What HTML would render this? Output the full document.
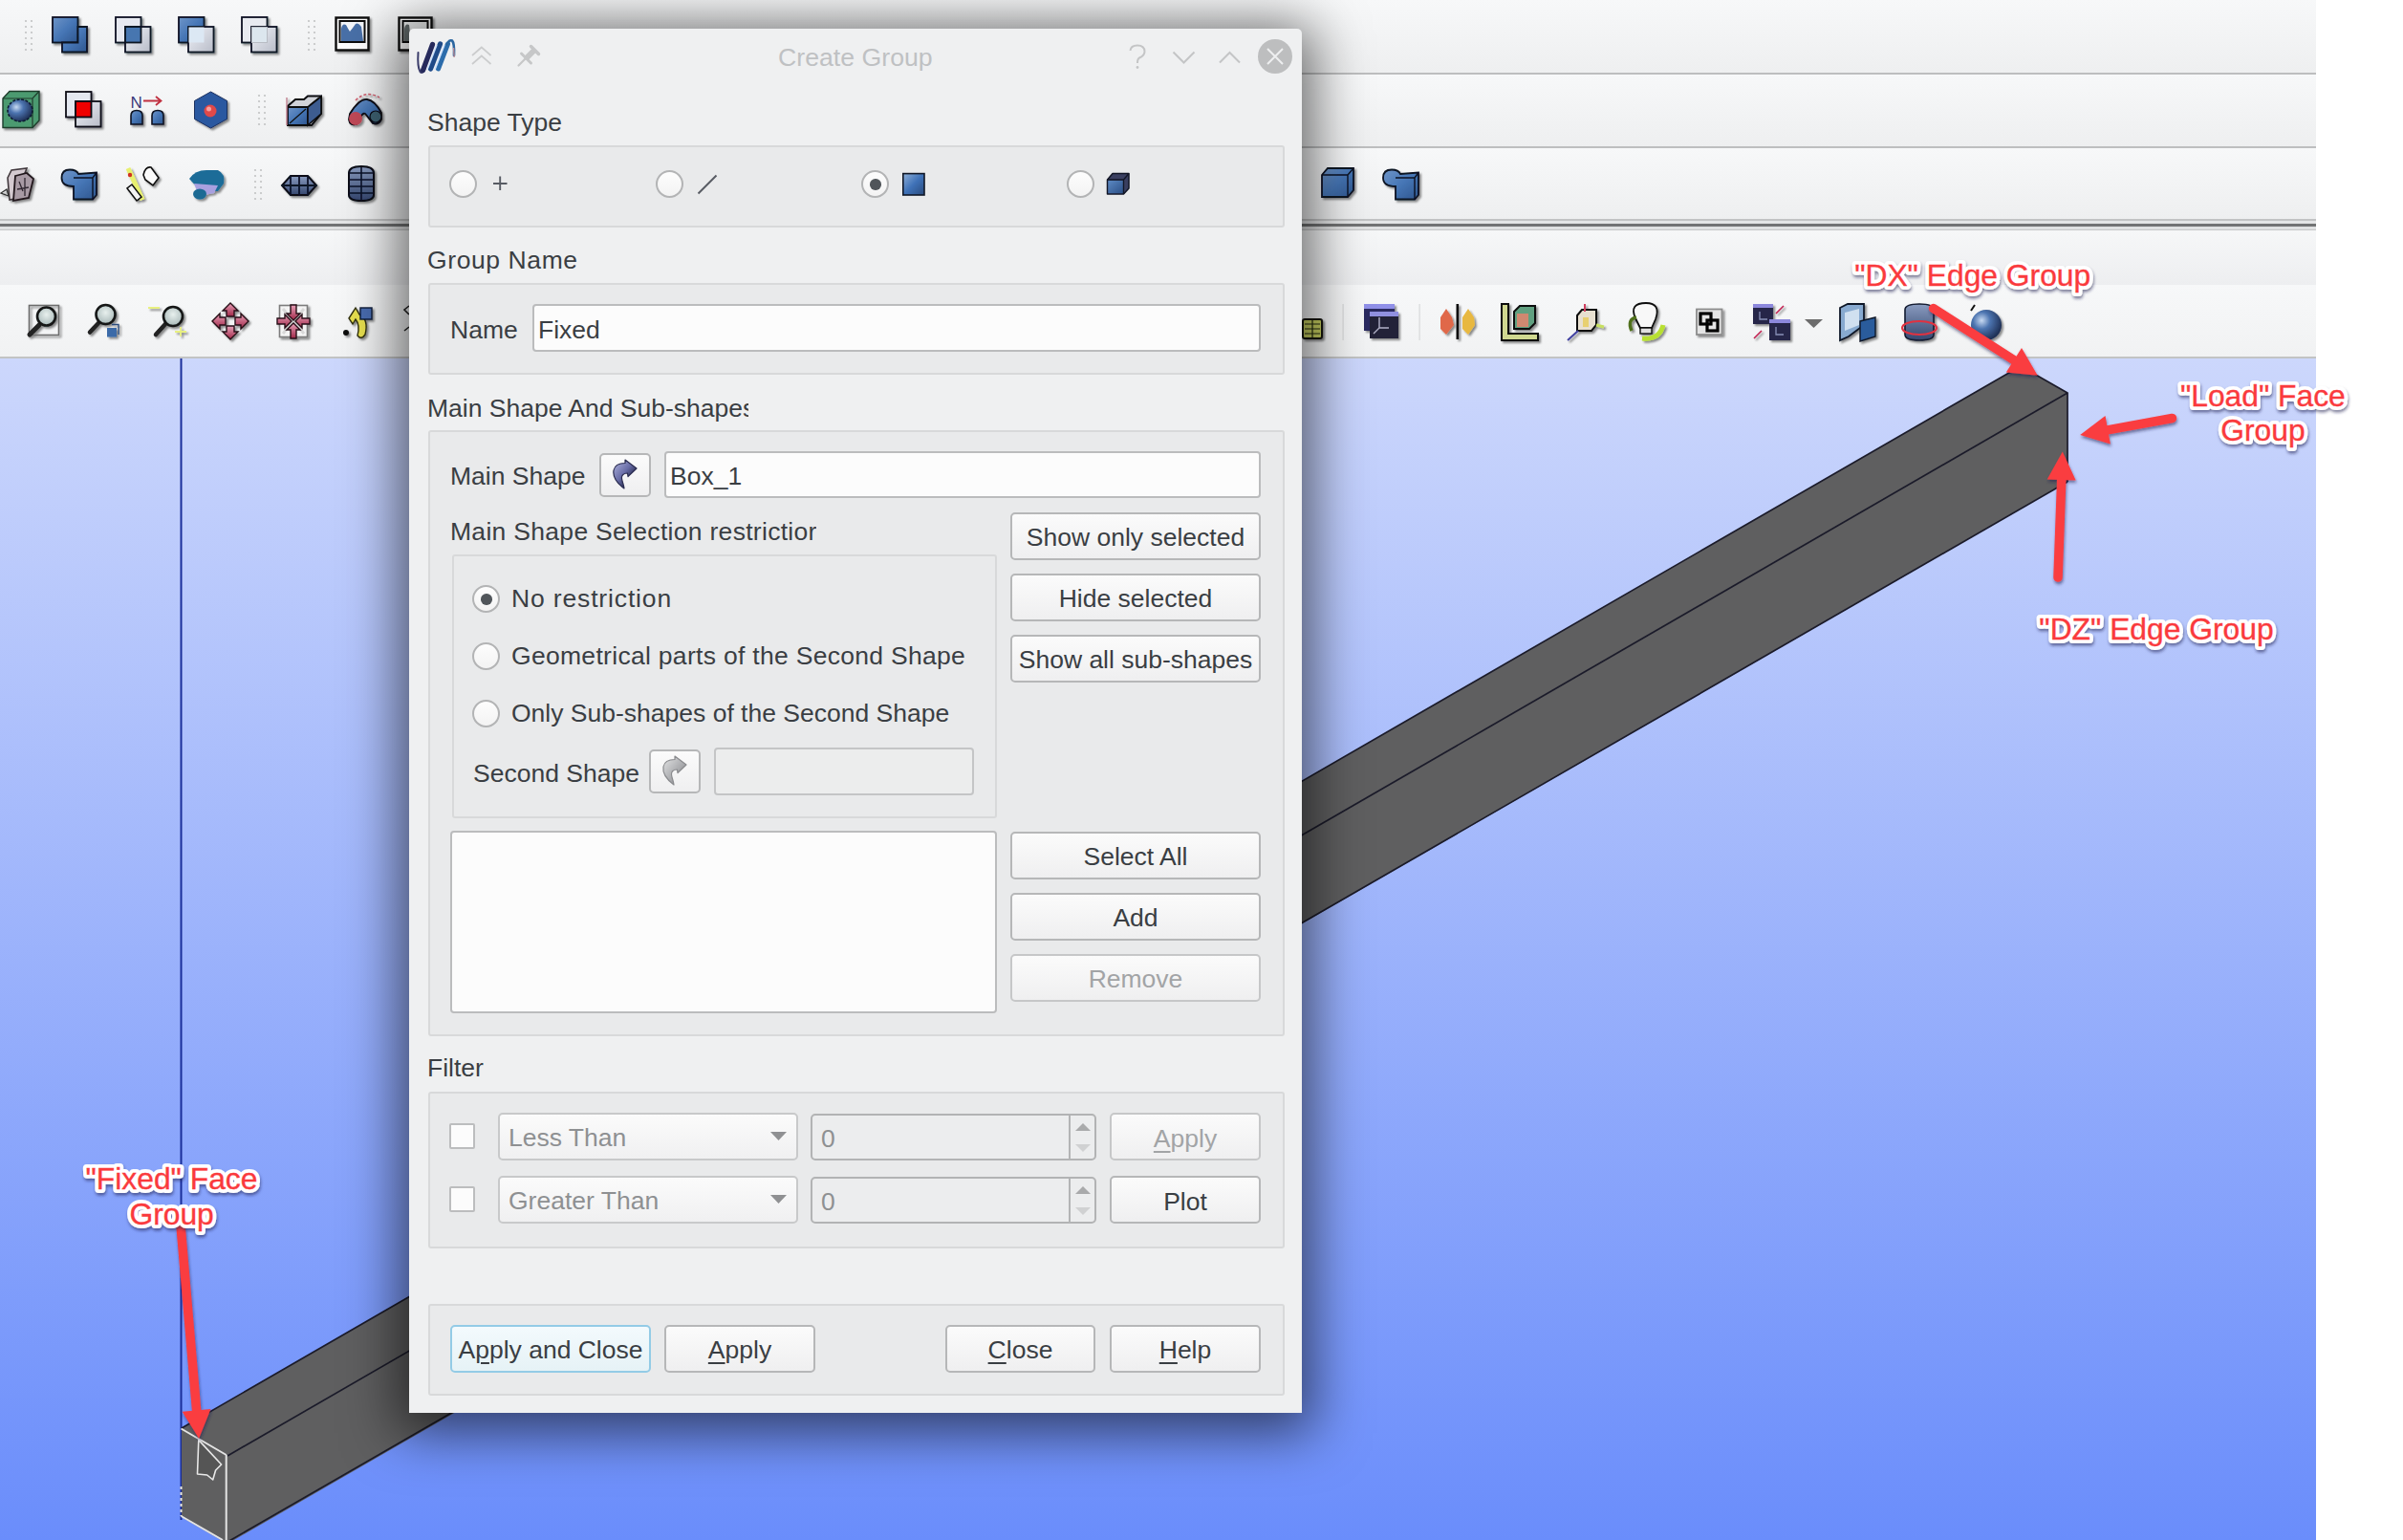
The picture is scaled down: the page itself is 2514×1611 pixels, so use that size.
<!DOCTYPE html>
<html><head><meta charset="utf-8">
<style>
*{box-sizing:border-box}
html,body{margin:0;padding:0}
body{width:2514px;height:1611px;position:relative;overflow:hidden;background:#fff;font-family:"Liberation Sans",sans-serif}
.a{position:absolute}
#app{left:0;top:0;width:2423px;height:1611px;overflow:hidden;background:#eff0f1}
.tb{position:absolute;left:0;width:2423px}
.t{position:absolute;white-space:nowrap;font-size:26.5px;color:#3a3e43;line-height:1}
.t u{text-decoration:underline;text-decoration-thickness:2px;text-underline-offset:4px}
.gb{position:absolute;background:#e9eaeb;border:2px solid #d8d9da;border-radius:3px}
.btn{position:absolute;background:linear-gradient(#fbfbfb,#efeff0);border:2px solid #b6b7b8;border-radius:5px}
.btn.dis{border-color:#c6c7c8}
.btn.foc{border:2px solid #93cbe6;background:linear-gradient(#f3fafd,#e6f2f6)}
.inp{position:absolute;background:#fcfcfc;border:2px solid #bbbcbd;border-radius:4px}
.inp.dis{background:#eceded;border-color:#c4c5c6}
.combo{position:absolute;background:linear-gradient(#fbfbfb,#f0f0f1);border:2px solid #c8c9ca;border-radius:5px}
.spin{position:absolute;background:#ecedee;border:2px solid #b2b3b4;border-radius:5px}
.rad{position:absolute;border-radius:50%;border:2px solid #b3b4b5;background:linear-gradient(#fdfdfd,#f3f3f3)}
.rad.on::after{content:"";position:absolute;left:7px;top:7px;width:11.5px;height:11.5px;border-radius:50%;background:#50555a}
.chk{position:absolute;border:2px solid #bcbdbe;border-radius:2px;background:#fcfcfc}
</style></head>
<body>
<div id="app" class="a">
  <div class="tb" style="top:0;height:76px;background:linear-gradient(#f7f8f9,#eeeff0)"></div>
  <div class="tb" style="top:75.5px;height:2px;background:#bdbebf"></div>
  <div class="tb" style="top:77.5px;height:75.5px;background:linear-gradient(#f7f8f9,#eeeff0)"></div>
  <div class="tb" style="top:152.5px;height:2px;background:#bdbebf"></div>
  <div class="tb" style="top:154.5px;height:74.5px;background:linear-gradient(#f7f8f9,#eeeff0)"></div>
  <div class="tb" style="top:229px;height:1.5px;background:#c2c3c4"></div>
  <div class="tb" style="top:230.5px;height:3px;background:#e4e5e6"></div>
  <div class="tb" style="top:233.5px;height:3px;background:#727374"></div>
  <div class="tb" style="top:236.5px;height:3px;background:#e0e1e2"></div>
  <div class="tb" style="top:239.5px;height:1.5px;background:#c6c7c8"></div>
  <div class="tb" style="top:241px;height:57px;background:linear-gradient(#f6f7f8,#edeef0)"></div>
  <div class="tb" style="top:298px;height:75px;background:linear-gradient(#f7f8f9,#f1f2f3)"></div>
  <div class="tb" style="top:373px;height:2px;background:#c2c3c4"></div>
  <div class="a" style="left:0;top:375px;width:2423px;height:1236px;background:linear-gradient(#ccd7fc,#6a8dfb)"></div>
  <svg class="a" style="left:0;top:0" width="2423" height="1611" viewBox="0 0 2423 1611">
    <line x1="189.5" y1="375" x2="189.5" y2="1590" stroke="#1a2f9a" stroke-width="2"/>
    <polygon points="2114,383 2163,411 2163,504 238,1615 190,1587 190,1494" fill="#5f5f60"/>
    <polyline points="190,1494 2114,383 2163,411 2163,504" fill="none" stroke="#1b1b2a" stroke-width="1.7"/>
    <line x1="238" y1="1523" x2="2163" y2="411" stroke="#1b1b2a" stroke-width="1.7"/>
    <line x1="238" y1="1613" x2="2163" y2="504" stroke="#1b1b2a" stroke-width="1.7"/>
    <path d="M189.5,1494.5 L236.7,1522 M236.7,1522 L236.7,1611 M189.5,1586 L233,1611" fill="none" stroke="#e4e4e4" stroke-width="2"/><path d="M189.5,1555 L189.5,1586" fill="none" stroke="#e4e4e4" stroke-width="2" stroke-dasharray="3 3"/><path d="M207.8,1506.4 L206.5,1542 L216.7,1543 L222.7,1548 L225.6,1538 L231.6,1532 Z" fill="#555555" stroke="#e8e8e8" stroke-width="1.6" stroke-linejoin="round"/>
  </svg>
  <!--ICONS-->
<svg class="a" style="left:0;top:0" width="2423" height="374" viewBox="0 0 2423 374">
<defs>
  <linearGradient id="bl" x1="0" y1="0" x2="1" y2="1"><stop offset="0" stop-color="#6f95c8"/><stop offset="0.5" stop-color="#4676b6"/><stop offset="1" stop-color="#2f568e"/></linearGradient>
  <linearGradient id="lt" x1="0" y1="0" x2="1" y2="1"><stop offset="0" stop-color="#f0f2f8"/><stop offset="1" stop-color="#b8bcc8"/></linearGradient>
  <linearGradient id="dk" x1="0" y1="0" x2="0" y2="1"><stop offset="0" stop-color="#8a9cc0"/><stop offset="1" stop-color="#34466e"/></linearGradient>
  <radialGradient id="sph" cx="0.35" cy="0.35" r="0.7"><stop offset="0" stop-color="#c8daf2"/><stop offset="0.4" stop-color="#4c74b0"/><stop offset="1" stop-color="#1c2c50"/></radialGradient>
  <radialGradient id="lens" cx="0.5" cy="0.4" r="0.6"><stop offset="0" stop-color="#e8f0ee"/><stop offset="1" stop-color="#a8b8b8"/></radialGradient>
  <linearGradient id="pk" x1="0" y1="0" x2="0" y2="1"><stop offset="0" stop-color="#e8a0b8"/><stop offset="1" stop-color="#a02848"/></linearGradient>
  <filter id="sh" x="-20%" y="-20%" width="150%" height="150%"><feGaussianBlur in="SourceAlpha" stdDeviation="1.2"/><feOffset dx="1.5" dy="2" result="o"/><feComponentTransfer><feFuncA type="linear" slope="0.45"/></feComponentTransfer><feMerge><feMergeNode/><feMergeNode in="SourceGraphic"/></feMerge></filter>
  <g id="grip" fill="#c2c3c4"><circle cx="0" cy="0" r="1.1"/><circle cx="6" cy="0" r="1.1"/><circle cx="0" cy="6" r="1.1"/><circle cx="6" cy="6" r="1.1"/><circle cx="0" cy="12" r="1.1"/><circle cx="6" cy="12" r="1.1"/><circle cx="0" cy="18" r="1.1"/><circle cx="6" cy="18" r="1.1"/><circle cx="0" cy="24" r="1.1"/><circle cx="6" cy="24" r="1.1"/><circle cx="0" cy="30" r="1.1"/><circle cx="6" cy="30" r="1.1"/></g>
</defs>
<!-- ROW 1 -->
<use href="#grip" x="27" y="22"/>
<g filter="url(#sh)" stroke="#0c1222" stroke-width="1.8">
  <rect x="55" y="18" width="26.5" height="26.5" fill="url(#bl)"/>
  <path d="M81.5,28 L91,28 L91,54.5 L65,54.5 L65,44.5 L81.5,44.5 Z" fill="url(#bl)"/>
  <rect x="121" y="18" width="26.5" height="26.5" fill="#e6e8f0"/>
  <rect x="131" y="28" width="26.5" height="26.5" fill="url(#lt)"/>
  <rect x="131" y="28" width="16.5" height="16.5" fill="#4676b0"/>
  <rect x="187" y="18" width="26.5" height="26.5" fill="url(#bl)"/>
  <rect x="197" y="28" width="26.5" height="26.5" fill="url(#lt)"/>
  <rect x="253" y="18" width="26.5" height="26.5" fill="#e8eaf0"/>
  <rect x="263" y="28" width="26.5" height="26.5" fill="url(#lt)"/>
</g>
<rect x="197.5" y="28.5" width="16" height="16" fill="#dce8f4"/>
<rect x="263.5" y="28.5" width="16" height="16" fill="#dce6ee" stroke="#b8bcc4" stroke-width="1"/>
<use href="#grip" x="323" y="22"/>
<g filter="url(#sh)">
  <rect x="351.5" y="18.5" width="34" height="34" fill="#fff" stroke="#0a0a0a" stroke-width="2.4"/>
  <rect x="355.5" y="22" width="26" height="22" fill="#f4f6fa" stroke="#0a0a0a" stroke-width="2"/>
  <path d="M357,43 L357,30 Q358,24 362,26 Q364,30 366,33 Q370,28 372,25 Q375,23 378,28 L380,43 Z" fill="#4a70a8"/>
  <rect x="417.5" y="18.5" width="34" height="34" fill="#fff" stroke="#0a0a0a" stroke-width="2.4"/>
  <rect x="421.5" y="22" width="26" height="22" fill="#e8eaea" stroke="#0a0a0a" stroke-width="2"/><path d="M423,43 L423,30 Q424,24 428,26 L430,43 Z" fill="#606868"/>
</g>
<!-- ROW 2 -->
<g filter="url(#sh)">
  <path d="M3,103 L10,95.5 L41,95.5 L41,126 L34,133.5 L3,133.5 Z" fill="#4c9a70" stroke="#1e3c2c" stroke-width="1.4"/>
  <path d="M3,103 L34,103 L41,95.5 M34,103 L34,133.5" fill="none" stroke="#1e3c2c" stroke-width="1.2"/>
  <ellipse cx="21" cy="115.5" rx="13" ry="11.5" fill="url(#sph)" stroke="#0e1a30" stroke-width="1.6" stroke-dasharray="3 1.5"/>
</g>
<g filter="url(#sh)" stroke="#0c0c14" stroke-width="1.8">
  <rect x="69" y="96" width="26.5" height="26.5" fill="#e4e8f0"/>
  <rect x="79" y="106" width="26.5" height="26.5" fill="url(#lt)"/>
  <rect x="79" y="106" width="16.5" height="16.5" fill="#f00000"/>
</g>
<text x="136.5" y="112.5" font-family="Liberation Sans" font-size="17" fill="#3c3a7a">N</text>
<path d="M150,105.5 L168,105.5 M163,101 L168.5,105.5 L163,110" stroke="#c03040" stroke-width="1.8" fill="none"/>
<g filter="url(#sh)" stroke="#0c1222" stroke-width="1.6" fill="url(#bl)">
  <path d="M137,130 L137,121 Q137,115.5 143,115.5 Q149,115.5 149,121 L149,130 Z"/>
  <path d="M159,130 L159,121 Q159,115.5 165,115.5 Q171,115.5 171,121 L171,130 Z"/>
</g>
<g filter="url(#sh)">
  <path d="M220.5,96 L237.5,105.5 L237.5,124.5 L220.5,134 L203.5,124.5 L203.5,105.5 Z" fill="#2c58a0" stroke="#1a3060" stroke-width="1"/>
  <circle cx="220" cy="116" r="6.5" fill="#e04848"/>
  <circle cx="218.5" cy="114" r="2.5" fill="#f8a0a0"/>
</g>
<use href="#grip" x="271" y="100"/>
<g filter="url(#sh)">
  <path d="M301,111 L309,104 L318,104 L322,100.5 L336,100.5 L336,119 L326,131 L301,131 Z" fill="#d0d2d8" stroke="#0a0a10" stroke-width="2"/>
  <path d="M301,112 L322,112 L322,131 L301,131 Z" fill="url(#bl)" stroke="#0a0a10" stroke-width="1.8"/>
  <path d="M322,112 L336,101 L336,119 L322,131 Z" fill="#3c5c90" stroke="#0a0a10" stroke-width="1.6"/>
  <path d="M303,129 L320,114 M324,110 L334,102" stroke="#101010" stroke-width="1.2"/>
  <path d="M300,102 L300,131" stroke="#c08090" stroke-width="1.4"/>
</g>
<g filter="url(#sh)">
  <path d="M366,119 Q376,103 384,104 Q392,105 399,118 L399,125 Q396,131 390,129 L383,120 Q381,117 378,121 L373,130 Q366,132 365,125 Z" fill="url(#bl)" stroke="#0a0a14" stroke-width="1.8"/>
  <circle cx="372" cy="124" r="7" fill="#c04858"/>
  <circle cx="393" cy="122" r="6" fill="#3c6070" stroke="#0a0a14" stroke-width="1.2"/>
  <path d="M372,105 Q383,94 397,102" stroke="#d06070" stroke-width="1.6" fill="none" stroke-dasharray="3 2"/>
</g>
<!-- ROW 3 -->
<g filter="url(#sh)">
  <path d="M8,186 L12,178 L28,176 L25,184 L26,206 L10,209 Z" fill="#d4cad0" stroke="#40383c" stroke-width="1.6"/>
  <path d="M16,184 L28,181 L35,187 L30,207 L14,210 Z" fill="#a89aa4" stroke="#20181c" stroke-width="1.8"/>
  <path d="M20,190 L24,200 M26,186 L26,205 M18,198 L30,196" stroke="#302830" stroke-width="1.3"/>
  <path d="M1,202 L7,198 L9,205 Z" fill="none" stroke="#303030" stroke-width="1.3"/>
</g>
<g filter="url(#sh)" stroke="#0c1222" stroke-width="1.8">
  <path d="M64.5,186 Q64.5,177.5 73,177.5 Q80,177.5 82,182 L101,180.5 L101,204 L97,208.5 L77,208.5 L77,195 Q64.5,195 64.5,186 Z" fill="url(#bl)"/>
  <path d="M77,186 L97,186 L101,180.5 M97,186 L97,208.5" fill="none" stroke-width="1.4"/>
</g>
<g filter="url(#sh)">
  <path d="M134,176 L149,209" stroke="#e8f070" stroke-width="5"/>
  <path d="M133,197 L143,210 L148,206 L138,193 Z" fill="#f4f4f4" stroke="#101010" stroke-width="1.5"/>
  <path d="M150,183 Q152,174 158,175 L166,186 L160,194 L152,188 Z" fill="#fafafa" stroke="#101010" stroke-width="1.6"/>
  <circle cx="136" cy="183" r="2.2" fill="#d03020"/>
</g>
<g filter="url(#sh)">
  <path d="M198,187 Q204,178 216,178 L228,178 Q236,182 234,192 L228,200 L210,200 Z" fill="#1c6c98"/>
  <path d="M203,192 L228,194 L224,202 L208,205 Z" fill="#a8a0e0"/>
  <ellipse cx="209" cy="203" rx="7" ry="5.5" fill="#1c6a94"/>
</g>
<use href="#grip" x="267" y="178"/>
<g filter="url(#sh)">
  <path d="M295,194 L304,184 L322,184 L331,194 L322,204 L304,204 Z" fill="url(#dk)" stroke="#080c18" stroke-width="2"/>
  <path d="M304,184 L304,204 M313,183 L313,205 M322,184 L322,204 M295,194 L331,194" stroke="#0a1228" stroke-width="1.8"/>
</g>
<g filter="url(#sh)">
  <path d="M365,181 Q365,174 378,174 Q391,174 391,181 L391,204 Q391,210 378,210 Q365,210 365,204 Z" fill="url(#dk)" stroke="#080c18" stroke-width="2"/>
  <path d="M378,175 L378,210 M365,181 L391,181 M365,188 L391,188 M365,195 L391,195 M365,202 L391,202" stroke="#0a1228" stroke-width="1.6"/>
</g>
<g filter="url(#sh)" stroke="#0c1222" stroke-width="1.8">
  <path d="M1383,183 L1389,176 L1416,176 L1416,199 L1410,206 L1383,206 Z" fill="url(#bl)"/>
  <path d="M1383,183 L1410,183 L1416,176 M1410,183 L1410,206" fill="none" stroke-width="1.4"/>
  <path d="M1447,186 Q1447,177.5 1456,177.5 Q1463,177.5 1465,182 L1484,180.5 L1484,204 L1480,208.5 L1460,208.5 L1460,195 Q1447,195 1447,186 Z" fill="url(#bl)"/>
  <path d="M1460,186 L1480,186 L1484,180.5 M1480,186 L1480,208.5" fill="none" stroke-width="1.4"/>
</g>
<!-- ROW 4 left -->
<g filter="url(#sh)">
  <rect x="30.5" y="319.5" width="31" height="31" fill="none" stroke="#6c6c6c" stroke-width="1.6"/>
  <path d="M41,340 L31,350" stroke="#202020" stroke-width="5" stroke-linecap="round"/>
  <circle cx="48.5" cy="331" r="9.5" fill="url(#lens)" stroke="#141818" stroke-width="2.6"/>
  <path d="M103,338 L94,347.5" stroke="#202020" stroke-width="4.5" stroke-linecap="round"/>
  <circle cx="110.5" cy="329" r="10" fill="url(#lens)" stroke="#141818" stroke-width="2.6"/>
  <rect x="112" y="343" width="10" height="9.5" fill="#3a6aa8"/>
  <path d="M117,339.5 L124,339.5 L124,350" stroke="#2c4c7c" stroke-width="1.4" fill="none"/>
  <path d="M173,339 L163,350" stroke="#202020" stroke-width="4.5" stroke-linecap="round"/>
  <circle cx="181" cy="331" r="10" fill="url(#lens)" stroke="#141818" stroke-width="2.6"/>
  <path d="M155,322 L167,322 M183,347 L195,347 M189,342 L189,352" stroke="#e8f080" stroke-width="1.8"/>
</g>
<g filter="url(#sh)" fill="url(#pk)" stroke="#281018" stroke-width="1.4">
  <path d="M241,317 L249,325 L245,325 L245,331 L237,331 L237,325 L233,325 Z"/>
  <path d="M241,355 L249,347 L245,347 L245,341 L237,341 L237,347 L233,347 Z"/>
  <path d="M222,336 L230,328 L230,332 L236,332 L236,340 L230,340 L230,344 Z"/>
  <path d="M260,336 L252,328 L252,332 L246,332 L246,340 L252,340 L252,344 Z"/>
</g>
<g filter="url(#sh)">
  <rect x="292.5" y="319.5" width="29" height="33" fill="#f4f4f4" stroke="#7c7c7c" stroke-width="1.6"/>
  <path d="M296,323 L318,349 M318,323 L296,349" stroke="#d8d8d8" stroke-width="3"/>
  <g fill="url(#pk)" stroke="#281018" stroke-width="1.4">
    <path d="M307,335 L314,328 L310,328 L310,319 L304,319 L304,328 L300,328 Z"/>
    <path d="M307,338 L314,345 L310,345 L310,354 L304,354 L304,345 L300,345 Z"/>
    <path d="M305,336 L298,329 L298,333 L290,333 L290,339 L298,339 L298,343 Z"/>
    <path d="M309,336 L316,329 L316,333 L324,333 L324,339 L316,339 L316,343 Z"/>
  </g>
</g>
<g filter="url(#sh)">
  <path d="M365,333 L372,322 L376,329 Q386,334 382,350 Q378,356 374,351 Q377,340 372,334 L369,339 Z" fill="#e8e050" stroke="#303010" stroke-width="1.4"/>
  <rect x="377" y="322" width="12" height="12" fill="#4a6cb0" stroke="#0e1a38" stroke-width="1.4"/>
  <circle cx="362" cy="348" r="3" fill="#101010"/>
</g>
<path d="M428,320 L423,324 L428,329 M428,342 L423,346" stroke="#202020" stroke-width="1.6" fill="none"/>
<!-- ROW 4 right -->
<g filter="url(#sh)">
  <rect x="1363" y="334" width="20" height="20" rx="2" fill="#c8d060" stroke="#141410" stroke-width="2"/>
  <path d="M1365,339 L1381,339 M1365,344 L1381,344 M1365,349 L1381,349 M1373,335 L1373,353" stroke="#202810" stroke-width="1.2"/>
</g>
<rect x="1404.5" y="318" width="1.2" height="38" fill="#d8d9da"/>
<g filter="url(#sh)">
  <rect x="1427" y="318" width="32" height="28" fill="#2a2a60"/>
  <rect x="1427" y="318" width="32" height="5" fill="#9090e8"/>
  <rect x="1433" y="326" width="30" height="28" fill="#242438"/>
  <rect x="1433" y="326" width="30" height="5" fill="#9090e0"/>
  <path d="M1443,332 L1443,343 L1453,343 M1443,343 L1437,349" stroke="#b0b0c8" stroke-width="1.4" fill="none"/>
</g>
<rect x="1484.5" y="318" width="1.2" height="38" fill="#d8d9da"/>
<g filter="url(#sh)">
  <path d="M1507,332 L1513,323 L1519,332 L1521,340 L1513,350 L1507,344 Z" fill="#e06848"/>
  <path d="M1530,332 L1536,323 L1542,332 L1543,340 L1536,350 L1530,344 Z" fill="#e8b840"/>
  <rect x="1523.5" y="318" width="2.6" height="37" fill="#101010"/>
</g>
<g filter="url(#sh)">
  <path d="M1571,318 L1578,318 L1578,349 L1609,349 L1609,356 L1571,356 Z" fill="#d0d890" stroke="#101010" stroke-width="2"/>
  <path d="M1584,326 L1590,320 L1606,320 L1606,338 L1600,344 L1584,344 Z" fill="#60a080" stroke="#101010" stroke-width="2"/>
  <path d="M1587,328 L1599,328 L1599,342 L1587,342 Z" fill="#d08870"/>
</g>
<g filter="url(#sh)">
  <path d="M1650,330 L1655,324 L1670,324 L1670,340 L1665,346 L1650,346 Z" fill="#e8e0d0" stroke="#101010" stroke-width="2"/>
  <rect x="1656" y="332" width="6" height="10" fill="#e8d070"/>
  <path d="M1651,346 L1640,356" stroke="#4040a0" stroke-width="2"/>
  <path d="M1670,340 L1678,342" stroke="#c8e060" stroke-width="3"/>
  <path d="M1658,318 L1658,326" stroke="#d04060" stroke-width="2"/>
</g>
<g filter="url(#sh)">
  <path d="M1711,333 Q1704,317 1722,317 Q1738,317 1732,334 L1728,343 L1716,343 Z" fill="#f8f8f8" stroke="#101010" stroke-width="1.8"/>
  <rect x="1716" y="343" width="12" height="6" fill="#e0e0e0" stroke="#101010" stroke-width="1.4"/>
  <path d="M1707,346 Q1702,334 1712,332" stroke="#50701c" stroke-width="3.5" fill="none"/>
  <path d="M1718,354 Q1736,356 1740,340" stroke="#b8e030" stroke-width="5" fill="none"/>
</g>
<g filter="url(#sh)">
  <rect x="1775" y="323.5" width="26.5" height="26.5" fill="#e4e4e4" stroke="#8c8c8c" stroke-width="1.8"/>
  <rect x="1779" y="328" width="11" height="11" fill="none" stroke="#000" stroke-width="3.2"/>
  <rect x="1786" y="335" width="11" height="11" fill="none" stroke="#000" stroke-width="3.2"/>
</g>
<g filter="url(#sh)">
  <rect x="1834" y="318" width="21" height="21" fill="#262848"/>
  <rect x="1834" y="318" width="21" height="4" fill="#8c88dc"/>
  <rect x="1851" y="334" width="22" height="22" fill="#262848"/>
  <rect x="1851" y="334" width="22" height="4" fill="#8c88dc"/>
  <path d="M1841,326 L1841,334 L1849,334 M1858,342 L1858,350 L1866,350" stroke="#8890b8" stroke-width="1.3" fill="none"/>
  <path d="M1858,328 L1866,320 M1835,354 L1843,346" stroke="#c02050" stroke-width="1.6"/>
</g>
<polygon points="1888,334 1907,334 1897.5,343" fill="#6c6c6c"/>
<g filter="url(#sh)">
  <path d="M1925,322 L1933,318 L1950,318 L1950,340 L1934,352 L1925,356 Z" fill="#88aad0" stroke="#101828" stroke-width="1.8"/>
  <path d="M1930,327 L1945,323 L1945,340 L1930,346 Z" fill="#d0e0f0"/>
  <path d="M1946,336 L1962,332 L1962,352 L1946,357 Z" fill="#2c5c9c" stroke="#101828" stroke-width="1.4"/>
</g>
<g filter="url(#sh)">
  <path d="M1993,324 Q1993,318 2008,318 Q2023,318 2023,324 L2023,350 Q2023,356 2008,356 Q1993,356 1993,350 Z" fill="url(#dk)" stroke="#141c30" stroke-width="1.6"/>
  <ellipse cx="2008" cy="343" rx="18" ry="7" fill="none" stroke="#e03040" stroke-width="2"/>
</g>
<path d="M2066,319 L2062,325" stroke="#101010" stroke-width="2"/>
<g filter="url(#sh)"><circle cx="2078" cy="340" r="16" fill="url(#sph)"/></g>
</svg>

</div>
<div id="dlg" class="a" style="left:428px;top:30px;width:934px;height:1448px;background:#eff0f1;border-radius:5px 5px 0 0;box-shadow:0 9px 56px 12px rgba(0,0,0,0.58)"></div>
<svg class="a" style="left:428px;top:30px" width="934" height="60" viewBox="428 30 934 60">
  <!-- salome logo -->
  <path d="M437.5,55 Q436.5,70 439.5,75 Q442,78 444.5,72" fill="none" stroke="#3a3c6a" stroke-width="2" stroke-linecap="round"/>
  <path d="M442.5,73.5 L452.5,46.5" fill="none" stroke="#262a5c" stroke-width="5.2" stroke-linecap="round"/>
  <path d="M450.5,72 L460.5,46" fill="none" stroke="#1f4a88" stroke-width="5.2" stroke-linecap="round"/>
  <path d="M458.5,72 L468.5,46" fill="none" stroke="#2c6cab" stroke-width="5" stroke-linecap="round"/><path d="M467.5,47 Q470,41 473,42.5 Q475.5,45 475,58" fill="none" stroke="#2a66a0" stroke-width="2.6" stroke-linecap="round"/>
  <path d="M474.6,50 L475.2,60" stroke="#d09090" stroke-width="1.2"/>
  <path d="M447,73 L457,47 M455,73 L465,47" fill="none" stroke="#c8e0ff" stroke-width="1.6" opacity="0.8"/>
  <!-- double chevron -->
  <path d="M494,58 L503.8,49.5 L513.5,58 M494,67 L503.8,58.5 L513.5,67" fill="none" stroke="#cbcccd" stroke-width="1.7"/>
  <!-- pin -->
  <path d="M542.5,68.5 L550,61" stroke="#c6c7c8" stroke-width="2.2" stroke-linecap="round"/>
  <path d="M545.5,56 L555.5,66" stroke="#c6c7c8" stroke-width="3" stroke-linecap="round"/>
  <path d="M550.5,61 L559,52.5" stroke="#c6c7c8" stroke-width="6"/>
  <path d="M555.5,48.5 L563.5,56.5" stroke="#c6c7c8" stroke-width="3.5" stroke-linecap="round"/>
  <!-- help -->
  <path d="M1182.5,53 Q1183,47.5 1190,47.5 Q1197.5,47.5 1197.5,54 Q1197.5,58 1192,60.5 Q1190,61.5 1190,66" fill="none" stroke="#c4c5c6" stroke-width="2"/>
  <circle cx="1190" cy="70.5" r="1.4" fill="#c4c5c6"/>
  <!-- minimize -->
  <path d="M1227.5,54.5 L1238.5,65.5 L1249.5,54.5" fill="none" stroke="#c4c5c6" stroke-width="2"/>
  <!-- maximize -->
  <path d="M1276,65.5 L1286.5,55 L1297,65.5" fill="none" stroke="#c4c5c6" stroke-width="2"/>
  <!-- close -->
  <circle cx="1334" cy="59" r="18" fill="#bdbebf"/>
  <path d="M1326,51 L1342,67 M1342,51 L1326,67" stroke="#eeeff0" stroke-width="2"/>
</svg>
<div class="t" style="left:814px;top:46.6px;color:#bfc1c3;font-size:26.7px">Create Group</div>
<div class="t" style="left:447px;top:114.57px">Shape Type</div>
<div class="gb" style="left:448px;top:152px;width:896px;height:86px"></div>
<div class="rad" style="left:470px;top:178px;width:29px;height:29px"></div>
<div class="rad" style="left:686px;top:178px;width:29px;height:29px"></div>
<div class="rad on" style="left:901px;top:178px;width:29px;height:29px"></div>
<div class="rad" style="left:1116px;top:178px;width:29px;height:29px"></div>
<svg class="a" style="left:500px;top:170px" width="700" height="45" viewBox="500 170 700 45">
  <defs>
    <linearGradient id="sqg" x1="0" y1="0" x2="1" y2="1">
      <stop offset="0" stop-color="#8fb0d8"/><stop offset="0.5" stop-color="#3f72b8"/><stop offset="1" stop-color="#2a4a7c"/>
    </linearGradient>
    <linearGradient id="cbg" x1="0" y1="0" x2="1" y2="1">
      <stop offset="0" stop-color="#5c8ac4"/><stop offset="1" stop-color="#2c4f86"/>
    </linearGradient>
  </defs>
  <path d="M516,192 L530.5,192 M523.2,184.5 L523.2,199" stroke="#575b63" stroke-width="1.9"/>
  <path d="M730.5,202.5 L749.5,183.5" stroke="#575b63" stroke-width="1.9"/>
  <rect x="944.8" y="181.6" width="22.2" height="22.4" fill="url(#sqg)" stroke="#111827" stroke-width="1.6"/>
  <path d="M1158.5,188 L1164,181.5 L1181,181.5 L1181,197 L1175.5,203 L1158.5,203 Z" fill="#3a3f60" stroke="#121626" stroke-width="1.5" stroke-linejoin="round"/>
  <rect x="1159.3" y="188.6" width="15.6" height="13.6" fill="url(#cbg)"/>
  <path d="M1158.5,188 L1175.5,188 L1181,181.5 M1175.5,188 L1175.5,203" fill="none" stroke="#121626" stroke-width="1.3"/>
</svg>
<div class="t" style="left:447px;top:258.57px;letter-spacing:0.6px">Group Name</div>
<div class="gb" style="left:448px;top:296px;width:896px;height:96px"></div>
<div class="t" style="left:471px;top:331.57px">Name</div>
<div class="inp" style="left:557px;top:318px;width:762px;height:50px"></div>
<div class="t" style="left:563px;top:331.57px">Fixed</div>
<div class="t" style="left:447px;top:413.57px">Main Shape And Sub-shape<span style="display:inline-block;width:6px;overflow:hidden;vertical-align:top">s</span></div>
<div class="gb" style="left:448px;top:450px;width:896px;height:634px"></div>
<div class="t" style="left:471px;top:484.57px">Main Shape</div>
<div class="btn" style="left:627px;top:474px;width:54px;height:46px"></div>
<div class="inp" style="left:695px;top:472px;width:624px;height:49px"></div>
<div class="t" style="left:701px;top:484.57px">Box_1</div>
<div class="t" style="left:471px;top:542.57px;letter-spacing:0.3px">Main Shape Selection restrictio<span style="display:inline-block;width:8px;overflow:hidden;vertical-align:top">r</span></div>
<div class="btn" style="left:1057px;top:536px;width:262px;height:50px"></div>
<div class="t" style="left:1057px;width:262px;text-align:center;top:549.07px">Show only selected</div>
<div class="btn" style="left:1057px;top:600px;width:262px;height:50px"></div>
<div class="t" style="left:1057px;width:262px;text-align:center;top:613.07px">Hide selected</div>
<div class="btn" style="left:1057px;top:664px;width:262px;height:50px"></div>
<div class="t" style="left:1057px;width:262px;text-align:center;top:677.07px">Show all sub-shapes</div>
<div class="btn" style="left:1057px;top:870px;width:262px;height:50px"></div>
<div class="t" style="left:1057px;width:262px;text-align:center;top:883.07px">Select All</div>
<div class="btn" style="left:1057px;top:934px;width:262px;height:50px"></div>
<div class="t" style="left:1057px;width:262px;text-align:center;top:947.07px">Add</div>
<div class="btn dis" style="left:1057px;top:998px;width:262px;height:50px"></div>
<div class="t" style="left:1057px;width:262px;text-align:center;top:1011.07px;color:#a2a4a6">Remove</div>
<div class="gb" style="left:473px;top:580px;width:570px;height:276px"></div>
<div class="rad on" style="left:494px;top:612px;width:29px;height:29px"></div>
<div class="t" style="left:535px;top:613.07px;letter-spacing:0.85px">No restriction</div>
<div class="rad" style="left:494px;top:672px;width:29px;height:29px"></div>
<div class="t" style="left:535px;top:673.07px;letter-spacing:0.3px">Geometrical parts of the Second Shape</div>
<div class="rad" style="left:494px;top:732px;width:29px;height:29px"></div>
<div class="t" style="left:535px;top:733.07px">Only Sub-shapes of the Second Shape</div>
<div class="t" style="left:495px;top:795.57px">Second Shape</div>
<div class="btn" style="left:679px;top:784px;width:54px;height:46px"></div>
<div class="inp dis" style="left:747px;top:782px;width:272px;height:50px"></div>
<div class="inp" style="left:471px;top:869px;width:572px;height:191px"></div>
<svg class="a" style="left:627px;top:474px" width="54" height="46" viewBox="627 474 54 46">
  <defs><linearGradient id="arg" x1="0" y1="0" x2="1" y2="1"><stop offset="0" stop-color="#b4b8e0"/><stop offset="0.45" stop-color="#6a6ea8"/><stop offset="0.75" stop-color="#25284c"/><stop offset="1" stop-color="#1a1c34"/></linearGradient></defs>
  <path d="M653,511 C645,505 641,498 642,492 C643,487 648,484.5 654,484.5 L654,481 L666,490 L657,498.5 L656.5,495 C652.5,495 650,497 650.5,500.5 C651,504 652.5,507 653,511 Z" fill="url(#arg)" stroke="#2a2c50" stroke-width="1.2" stroke-linejoin="round"/>
</svg>
<svg class="a" style="left:679px;top:784px" width="54" height="46" viewBox="679 784 54 46">
  <defs><linearGradient id="arg2" x1="0" y1="0" x2="1" y2="1"><stop offset="0" stop-color="#e4e5e6"/><stop offset="0.5" stop-color="#b0b1b4"/><stop offset="1" stop-color="#7c7d80"/></linearGradient></defs>
  <path d="M705,821 C697,815 693,808 694,802 C695,797 700,794.5 706,794.5 L706,791 L718,800 L709,808.5 L708.5,805 C704.5,805 702,807 702.5,810.5 C703,814 704.5,817 705,821 Z" fill="url(#arg2)" stroke="#8a8b8e" stroke-width="1.2" stroke-linejoin="round"/>
</svg>
<div class="t" style="left:447px;top:1103.57px">Filter</div>
<div class="gb" style="left:448px;top:1142px;width:896px;height:164px"></div>
<div class="chk" style="left:470px;top:1175px;width:27px;height:27px"></div>
<div class="combo" style="left:521px;top:1164px;width:314px;height:50px"></div>
<div class="t" style="left:532px;top:1177.07px;color:#8e9092">Less Than</div>
<svg class="a" style="left:806px;top:1184px" width="17" height="9"><polygon points="0,0 17,0 8.5,9" fill="#8f9092"/></svg>
<div class="spin" style="left:848px;top:1165px;width:299px;height:49px"></div>
<div class="a" style="left:1118px;top:1167px;width:2px;height:46px;background:#b3b4b5"></div>
<div class="t" style="left:859px;top:1177.57px;color:#8e9092">0</div>
<svg class="a" style="left:1125px;top:1175px" width="16" height="8"><polygon points="0,8 16,8 8,0" fill="#a9aaab"/></svg>
<svg class="a" style="left:1125px;top:1197px" width="16" height="8"><polygon points="0,0 16,0 8,8" fill="#d0d1d2"/></svg>
<div class="chk" style="left:470px;top:1241px;width:27px;height:27px"></div>
<div class="combo" style="left:521px;top:1230px;width:314px;height:50px"></div>
<div class="t" style="left:532px;top:1243.07px;color:#8e9092">Greater Than</div>
<svg class="a" style="left:806px;top:1250px" width="17" height="9"><polygon points="0,0 17,0 8.5,9" fill="#8f9092"/></svg>
<div class="spin" style="left:848px;top:1231px;width:299px;height:49px"></div>
<div class="a" style="left:1118px;top:1233px;width:2px;height:46px;background:#b3b4b5"></div>
<div class="t" style="left:859px;top:1243.57px;color:#8e9092">0</div>
<svg class="a" style="left:1125px;top:1241px" width="16" height="8"><polygon points="0,8 16,8 8,0" fill="#a9aaab"/></svg>
<svg class="a" style="left:1125px;top:1263px" width="16" height="8"><polygon points="0,0 16,0 8,8" fill="#d0d1d2"/></svg>
<div class="btn dis" style="left:1161px;top:1164px;width:158px;height:50px"></div>
<div class="t" style="left:1161px;width:158px;text-align:center;top:1177.57px;color:#a2a4a6"><u>A</u>pply</div>
<div class="btn" style="left:1161px;top:1230px;width:158px;height:50px"></div>
<div class="t" style="left:1161px;width:158px;text-align:center;top:1243.57px">Plot</div>
<div class="gb" style="left:448px;top:1364px;width:896px;height:96px"></div>
<div class="btn foc" style="left:471px;top:1386px;width:210px;height:50px"></div>
<div class="t" style="left:471px;width:210px;text-align:center;top:1398.57px">A<u>p</u>ply and Close</div>
<div class="btn" style="left:695px;top:1386px;width:158px;height:50px"></div>
<div class="t" style="left:695px;width:158px;text-align:center;top:1398.57px"><u>A</u>pply</div>
<div class="btn" style="left:989px;top:1386px;width:157px;height:50px"></div>
<div class="t" style="left:989px;width:157px;text-align:center;top:1398.57px"><u>C</u>lose</div>
<div class="btn" style="left:1161px;top:1386px;width:158px;height:50px"></div>
<div class="t" style="left:1161px;width:158px;text-align:center;top:1398.57px"><u>H</u>elp</div>
<svg class="a" style="left:0;top:0" width="2514" height="1611" viewBox="0 0 2514 1611"><defs><filter id="ash" x="-10%" y="-10%" width="120%" height="130%"><feDropShadow dx="0.8" dy="2.5" stdDeviation="1.8" flood-color="#1c2450" flood-opacity="0.55"/></filter></defs><g filter="url(#ash)"><path d="M2022.6,322.6 L2108.6,377.8" stroke="#fa3d40" stroke-width="9.5" stroke-linecap="round"/><polygon points="2131.7,392.7 2098.8,389.4 2115.0,364.1" fill="#fa3d40"/><path d="M2272.5,437.5 L2203.3,450.1" stroke="#fa3d40" stroke-width="9.5" stroke-linecap="round"/><polygon points="2176.2,455.0 2202.5,435.0 2207.9,464.5" fill="#fa3d40"/><path d="M2153.0,604.0 L2156.8,500.1" stroke="#fa3d40" stroke-width="9.5" stroke-linecap="round"/><polygon points="2157.8,472.6 2171.7,502.6 2141.7,501.5" fill="#fa3d40"/><path d="M189.0,1282.0 L205.8,1477.4" stroke="#fa3d40" stroke-width="9.5" stroke-linecap="round"/><polygon points="208.1,1504.8 190.6,1476.7 220.5,1474.1" fill="#fa3d40"/></g><g filter="url(#ash)" font-family="Liberation Sans" font-size="31.8" fill="#ffffff" stroke="#ffffff" stroke-width="8" stroke-linejoin="round" text-anchor="middle"><text x="2063.7" y="299.3">&quot;DX&quot; Edge Group</text><text x="2367.4" y="425.3">&quot;Load&quot; Face</text><text x="2367.4" y="461">Group</text><text x="2256" y="668.8">&quot;DZ&quot; Edge Group</text><text x="179.5" y="1244.4">&quot;Fixed&quot; Face</text><text x="179.6" y="1280.6">Group</text></g><g font-family="Liberation Sans" font-size="31.8" fill="#fa3a3d" stroke="#fa3a3d" stroke-width="0.35" text-anchor="middle"><text x="2063.7" y="299.3">&quot;DX&quot; Edge Group</text><text x="2367.4" y="425.3">&quot;Load&quot; Face</text><text x="2367.4" y="461">Group</text><text x="2256" y="668.8">&quot;DZ&quot; Edge Group</text><text x="179.5" y="1244.4">&quot;Fixed&quot; Face</text><text x="179.6" y="1280.6">Group</text></g></svg>
</body></html>
